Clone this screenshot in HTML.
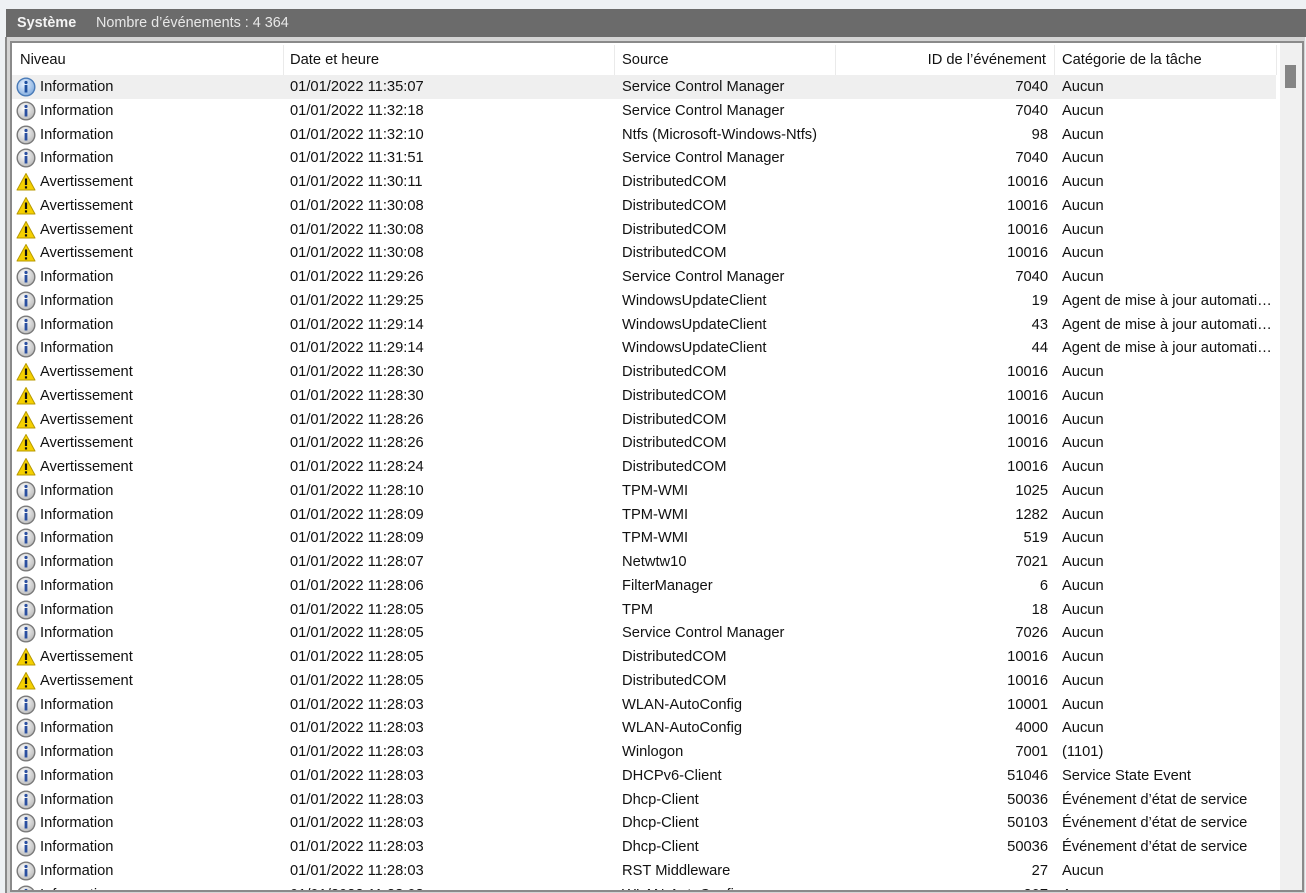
<!DOCTYPE html>
<html><head><meta charset="utf-8"><style>
*{margin:0;padding:0;box-sizing:border-box}
html,body{width:1306px;height:893px;overflow:hidden}
body{background:#eef1f4;font-family:"Liberation Sans",sans-serif;font-size:14.7px;color:#111;position:relative}
#bar{position:absolute;left:6px;top:9px;width:1300px;height:28px;background:#6b6b6b;color:#f4f4f4;font-size:14.4px}
#bar b{position:absolute;left:11px;top:6px}
#bar span{position:absolute;left:90px;top:6px;color:#e8e8e8}
#frame{position:absolute;left:5px;top:37px;width:1300px;height:856px;background:#d4d4d4;border-left:2px solid #8a8a8a}
#panel{position:absolute;left:10px;top:41px;width:1294px;height:851px;background:#fff;border:2px solid #8a8a8a;overflow:hidden}
.hd{position:absolute;top:9px}
.sep{position:absolute;top:2px;width:1px;height:30px;background:#eaeaea}
#rows{position:absolute;left:0;top:32px;width:1264px}
.r{position:relative;height:23.75px;line-height:25px;white-space:nowrap}
.r.sel{background:#efefef}
.r span{position:absolute}
.c1{left:28px}.c2{left:278px}.c3{left:610px}.c4{right:228px;text-align:right}.c5{left:1050px}
.ic{position:absolute;left:4px;top:2px;width:20px;height:20px}
#sb{position:absolute;right:0;top:0;width:22px;height:847px;background:#f0f0f0}
#th{position:absolute;left:5px;top:22px;width:11px;height:23px;background:#858585}
</style></head><body>
<div id="bar"><b>Système</b><span>Nombre d’événements : 4 364</span></div>
<div id="frame"></div>
<div id="panel">
<div class="hd" style="left:8px">Niveau</div>
<div class="hd" style="left:278px">Date et heure</div>
<div class="hd" style="left:610px">Source</div>
<div class="hd" style="right:256px">ID de l’événement</div>
<div class="hd" style="left:1050px">Catégorie de la tâche</div>
<div class="sep" style="left:271px"></div><div class="sep" style="left:602px"></div><div class="sep" style="left:823px"></div><div class="sep" style="left:1042px"></div><div class="sep" style="left:1264px"></div>
<svg width="0" height="0" style="position:absolute"><defs>
<radialGradient id="gb" cx=".4" cy=".35" r=".7"><stop offset="0" stop-color="#e8f2ff"/><stop offset="1" stop-color="#7ea9dc"/></radialGradient>
<radialGradient id="gg" cx=".4" cy=".35" r=".7"><stop offset="0" stop-color="#ffffff"/><stop offset="1" stop-color="#b8b8b8"/></radialGradient>
<symbol id="ib" viewBox="0 0 20 20"><circle cx="10" cy="10" r="8.8" fill="url(#gb)" stroke="#4a7bb8" stroke-width="1.4"/><circle cx="10" cy="5.5" r="1.6" fill="#1d4fa0"/><rect x="8.6" y="8" width="2.8" height="7.5" fill="#1d4fa0"/></symbol>
<symbol id="ig" viewBox="0 0 20 20"><circle cx="10" cy="10" r="8.8" fill="url(#gg)" stroke="#7a7a7a" stroke-width="1.4"/><circle cx="10" cy="5.5" r="1.6" fill="#2a4fa0"/><rect x="8.6" y="8" width="2.8" height="7.5" fill="#2a4fa0"/></symbol>
<symbol id="w" viewBox="0 0 20 20"><path d="M10 1.5 L19 18 H1 Z" fill="#f5d000" stroke="#b89a00" stroke-width="1" stroke-linejoin="round"/><rect x="8.9" y="6.5" width="2.2" height="6.5" fill="#111"/><rect x="8.9" y="14.3" width="2.2" height="2.2" fill="#111"/></symbol>
</defs></svg>
<div id="rows">
<div class="r sel"><svg class="ic"><use href="#ib"/></svg><span class="c1">Information</span><span class="c2">01/01/2022 11:35:07</span><span class="c3">Service Control Manager</span><span class="c4">7040</span><span class="c5">Aucun</span></div>
<div class="r"><svg class="ic"><use href="#ig"/></svg><span class="c1">Information</span><span class="c2">01/01/2022 11:32:18</span><span class="c3">Service Control Manager</span><span class="c4">7040</span><span class="c5">Aucun</span></div>
<div class="r"><svg class="ic"><use href="#ig"/></svg><span class="c1">Information</span><span class="c2">01/01/2022 11:32:10</span><span class="c3">Ntfs (Microsoft-Windows-Ntfs)</span><span class="c4">98</span><span class="c5">Aucun</span></div>
<div class="r"><svg class="ic"><use href="#ig"/></svg><span class="c1">Information</span><span class="c2">01/01/2022 11:31:51</span><span class="c3">Service Control Manager</span><span class="c4">7040</span><span class="c5">Aucun</span></div>
<div class="r"><svg class="ic"><use href="#w"/></svg><span class="c1">Avertissement</span><span class="c2">01/01/2022 11:30:11</span><span class="c3">DistributedCOM</span><span class="c4">10016</span><span class="c5">Aucun</span></div>
<div class="r"><svg class="ic"><use href="#w"/></svg><span class="c1">Avertissement</span><span class="c2">01/01/2022 11:30:08</span><span class="c3">DistributedCOM</span><span class="c4">10016</span><span class="c5">Aucun</span></div>
<div class="r"><svg class="ic"><use href="#w"/></svg><span class="c1">Avertissement</span><span class="c2">01/01/2022 11:30:08</span><span class="c3">DistributedCOM</span><span class="c4">10016</span><span class="c5">Aucun</span></div>
<div class="r"><svg class="ic"><use href="#w"/></svg><span class="c1">Avertissement</span><span class="c2">01/01/2022 11:30:08</span><span class="c3">DistributedCOM</span><span class="c4">10016</span><span class="c5">Aucun</span></div>
<div class="r"><svg class="ic"><use href="#ig"/></svg><span class="c1">Information</span><span class="c2">01/01/2022 11:29:26</span><span class="c3">Service Control Manager</span><span class="c4">7040</span><span class="c5">Aucun</span></div>
<div class="r"><svg class="ic"><use href="#ig"/></svg><span class="c1">Information</span><span class="c2">01/01/2022 11:29:25</span><span class="c3">WindowsUpdateClient</span><span class="c4">19</span><span class="c5">Agent de mise à jour automati…</span></div>
<div class="r"><svg class="ic"><use href="#ig"/></svg><span class="c1">Information</span><span class="c2">01/01/2022 11:29:14</span><span class="c3">WindowsUpdateClient</span><span class="c4">43</span><span class="c5">Agent de mise à jour automati…</span></div>
<div class="r"><svg class="ic"><use href="#ig"/></svg><span class="c1">Information</span><span class="c2">01/01/2022 11:29:14</span><span class="c3">WindowsUpdateClient</span><span class="c4">44</span><span class="c5">Agent de mise à jour automati…</span></div>
<div class="r"><svg class="ic"><use href="#w"/></svg><span class="c1">Avertissement</span><span class="c2">01/01/2022 11:28:30</span><span class="c3">DistributedCOM</span><span class="c4">10016</span><span class="c5">Aucun</span></div>
<div class="r"><svg class="ic"><use href="#w"/></svg><span class="c1">Avertissement</span><span class="c2">01/01/2022 11:28:30</span><span class="c3">DistributedCOM</span><span class="c4">10016</span><span class="c5">Aucun</span></div>
<div class="r"><svg class="ic"><use href="#w"/></svg><span class="c1">Avertissement</span><span class="c2">01/01/2022 11:28:26</span><span class="c3">DistributedCOM</span><span class="c4">10016</span><span class="c5">Aucun</span></div>
<div class="r"><svg class="ic"><use href="#w"/></svg><span class="c1">Avertissement</span><span class="c2">01/01/2022 11:28:26</span><span class="c3">DistributedCOM</span><span class="c4">10016</span><span class="c5">Aucun</span></div>
<div class="r"><svg class="ic"><use href="#w"/></svg><span class="c1">Avertissement</span><span class="c2">01/01/2022 11:28:24</span><span class="c3">DistributedCOM</span><span class="c4">10016</span><span class="c5">Aucun</span></div>
<div class="r"><svg class="ic"><use href="#ig"/></svg><span class="c1">Information</span><span class="c2">01/01/2022 11:28:10</span><span class="c3">TPM-WMI</span><span class="c4">1025</span><span class="c5">Aucun</span></div>
<div class="r"><svg class="ic"><use href="#ig"/></svg><span class="c1">Information</span><span class="c2">01/01/2022 11:28:09</span><span class="c3">TPM-WMI</span><span class="c4">1282</span><span class="c5">Aucun</span></div>
<div class="r"><svg class="ic"><use href="#ig"/></svg><span class="c1">Information</span><span class="c2">01/01/2022 11:28:09</span><span class="c3">TPM-WMI</span><span class="c4">519</span><span class="c5">Aucun</span></div>
<div class="r"><svg class="ic"><use href="#ig"/></svg><span class="c1">Information</span><span class="c2">01/01/2022 11:28:07</span><span class="c3">Netwtw10</span><span class="c4">7021</span><span class="c5">Aucun</span></div>
<div class="r"><svg class="ic"><use href="#ig"/></svg><span class="c1">Information</span><span class="c2">01/01/2022 11:28:06</span><span class="c3">FilterManager</span><span class="c4">6</span><span class="c5">Aucun</span></div>
<div class="r"><svg class="ic"><use href="#ig"/></svg><span class="c1">Information</span><span class="c2">01/01/2022 11:28:05</span><span class="c3">TPM</span><span class="c4">18</span><span class="c5">Aucun</span></div>
<div class="r"><svg class="ic"><use href="#ig"/></svg><span class="c1">Information</span><span class="c2">01/01/2022 11:28:05</span><span class="c3">Service Control Manager</span><span class="c4">7026</span><span class="c5">Aucun</span></div>
<div class="r"><svg class="ic"><use href="#w"/></svg><span class="c1">Avertissement</span><span class="c2">01/01/2022 11:28:05</span><span class="c3">DistributedCOM</span><span class="c4">10016</span><span class="c5">Aucun</span></div>
<div class="r"><svg class="ic"><use href="#w"/></svg><span class="c1">Avertissement</span><span class="c2">01/01/2022 11:28:05</span><span class="c3">DistributedCOM</span><span class="c4">10016</span><span class="c5">Aucun</span></div>
<div class="r"><svg class="ic"><use href="#ig"/></svg><span class="c1">Information</span><span class="c2">01/01/2022 11:28:03</span><span class="c3">WLAN-AutoConfig</span><span class="c4">10001</span><span class="c5">Aucun</span></div>
<div class="r"><svg class="ic"><use href="#ig"/></svg><span class="c1">Information</span><span class="c2">01/01/2022 11:28:03</span><span class="c3">WLAN-AutoConfig</span><span class="c4">4000</span><span class="c5">Aucun</span></div>
<div class="r"><svg class="ic"><use href="#ig"/></svg><span class="c1">Information</span><span class="c2">01/01/2022 11:28:03</span><span class="c3">Winlogon</span><span class="c4">7001</span><span class="c5">(1101)</span></div>
<div class="r"><svg class="ic"><use href="#ig"/></svg><span class="c1">Information</span><span class="c2">01/01/2022 11:28:03</span><span class="c3">DHCPv6-Client</span><span class="c4">51046</span><span class="c5">Service State Event</span></div>
<div class="r"><svg class="ic"><use href="#ig"/></svg><span class="c1">Information</span><span class="c2">01/01/2022 11:28:03</span><span class="c3">Dhcp-Client</span><span class="c4">50036</span><span class="c5">Événement d’état de service</span></div>
<div class="r"><svg class="ic"><use href="#ig"/></svg><span class="c1">Information</span><span class="c2">01/01/2022 11:28:03</span><span class="c3">Dhcp-Client</span><span class="c4">50103</span><span class="c5">Événement d’état de service</span></div>
<div class="r"><svg class="ic"><use href="#ig"/></svg><span class="c1">Information</span><span class="c2">01/01/2022 11:28:03</span><span class="c3">Dhcp-Client</span><span class="c4">50036</span><span class="c5">Événement d’état de service</span></div>
<div class="r"><svg class="ic"><use href="#ig"/></svg><span class="c1">Information</span><span class="c2">01/01/2022 11:28:03</span><span class="c3">RST Middleware</span><span class="c4">27</span><span class="c5">Aucun</span></div>
<div class="r"><svg class="ic"><use href="#ig"/></svg><span class="c1">Information</span><span class="c2">01/01/2022 11:28:03</span><span class="c3">WLAN-AutoConfig</span><span class="c4">207</span><span class="c5">Aucun</span></div>
</div>
<div id="sb"><div id="th"></div></div>
</div>
</body></html>
